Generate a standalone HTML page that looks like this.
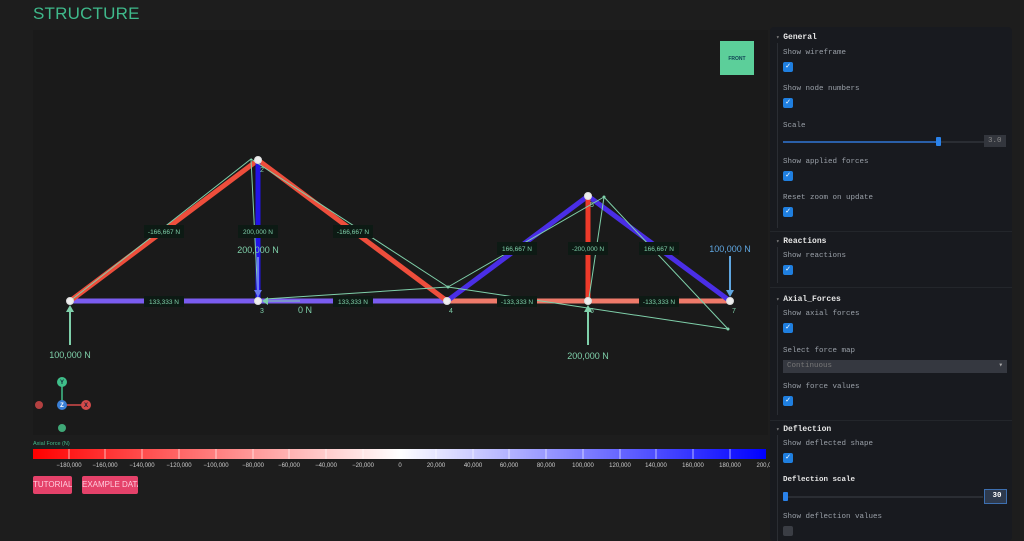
<!DOCTYPE html>
<html><head><meta charset="utf-8"><style>
html,body{margin:0;width:1024px;height:541px;overflow:hidden}
body{background:#1d1d1d;font-family:"Liberation Sans",sans-serif;position:relative}
.title{position:absolute;left:33px;top:4px;color:#3fb98b;font-size:17px;letter-spacing:.2px}
.canvas{position:absolute;left:33px;top:30px;width:735px;height:405px;background:#1a1a1a}
.side{position:absolute;left:770px;top:27px;width:242px;height:514px;background:#181a1f;border-radius:4px;font-family:"Liberation Mono",monospace;font-size:7.5px;color:#9aa0a8}
.sec{position:absolute;left:6px;color:#e6e6e6;font-weight:bold;font-size:8px}
.sec:before{content:"▾ ";color:#888;font-size:6px}
.lbl{position:absolute;left:13px;white-space:nowrap}
.cb{position:absolute;left:13px;width:10px;height:10px;background:#1f7fe0;border-radius:2px;color:#fff;font-size:8px;line-height:10px;text-align:center}
.vline{position:absolute;left:7px;width:1px;background:#2a2d33}
.hline{position:absolute;left:0;width:242px;height:1px;background:#23262b}
.btn{position:absolute;top:476px;height:18px;background:#e5426a;color:#fcd;font-size:8px;line-height:18px;text-align:center;border-radius:2px;white-space:nowrap;overflow:hidden}
.tk{position:absolute;top:463px;font-size:6px;color:#ccc;transform:translateX(-50%);white-space:nowrap}
</style></head><body>
<div class="title">STRUCTURE</div>
<div class="canvas"></div>
<svg style="position:absolute;left:0;top:0" width="1024" height="541">
<g stroke-linecap="round">
<line x1="70" y1="301" x2="258" y2="301" stroke="#7a5cf0" stroke-width="5"/>
<line x1="258" y1="301" x2="447" y2="301" stroke="#7a5cf0" stroke-width="5"/>
<line x1="447" y1="301" x2="730" y2="301" stroke="#ef7a6a" stroke-width="5"/>
<line x1="70" y1="301" x2="258" y2="160" stroke="#ee4e3c" stroke-width="5"/>
<line x1="258" y1="160" x2="447" y2="301" stroke="#ee4e3c" stroke-width="5"/>
<line x1="258" y1="160" x2="258" y2="301" stroke="#2214e8" stroke-width="5"/>
<line x1="447" y1="301" x2="588" y2="196" stroke="#4a2ee6" stroke-width="5"/>
<line x1="588" y1="196" x2="730" y2="301" stroke="#4a2ee6" stroke-width="5"/>
<line x1="588" y1="196" x2="588" y2="301" stroke="#ee3a2a" stroke-width="5"/>
</g>
<g stroke="#7fd0aa" stroke-width="1" fill="none">
<polyline points="70,301 251,159 258,300"/>
<line x1="251" y1="159" x2="448" y2="287"/>
<line x1="265" y1="299" x2="448" y2="287"/>
<line x1="448" y1="287" x2="604" y2="197"/>
<line x1="604" y1="197" x2="589" y2="298"/>
<line x1="604" y1="197" x2="728" y2="329"/>
<line x1="448" y1="287" x2="728" y2="329"/>
</g>
<g fill="#7fd0aa"><circle cx="448" cy="287" r="1.5"/><circle cx="604" cy="197" r="1.5"/><circle cx="728" cy="329" r="1.5"/></g>
<g fill="#eee" stroke="#ddd"><circle cx="70" cy="301" r="3.5"/><circle cx="258" cy="160" r="3.5"/><circle cx="258" cy="301" r="3.5"/><circle cx="447" cy="301" r="3.5"/><circle cx="588" cy="196" r="3.5"/><circle cx="588" cy="301" r="3.5"/><circle cx="730" cy="301" r="3.5"/></g>
<g font-size="7" fill="#7fd0aa" text-anchor="middle">
<text x="262" y="172">2</text><text x="262" y="313">3</text><text x="451" y="313">4</text><text x="592" y="207">5</text><text x="592" y="313">6</text><text x="734" y="313">7</text>
</g>
<g stroke="#7fd0aa" stroke-width="2" fill="#7fd0aa">
<line x1="70" y1="345" x2="70" y2="310"/><polygon points="66,312 74,312 70,305" stroke="none"/>
<line x1="588" y1="345" x2="588" y2="310"/><polygon points="584,312 592,312 588,305" stroke="none"/>
<line x1="300" y1="301" x2="268" y2="301" stroke-width="1"/><polygon points="268,297 268,305 262,301" stroke="none"/>
</g>
<g stroke="#6a7af0" stroke-width="2" fill="#6a7af0"><line x1="258" y1="257" x2="258" y2="290"/><polygon points="254,290 262,290 258,297" stroke="none"/></g>
<g stroke="#5fa6e0" stroke-width="2" fill="#5fa6e0"><line x1="730" y1="256" x2="730" y2="290"/><polygon points="726,290 734,290 730,297" stroke="none"/></g>
<g font-size="9" fill="#7fd0aa" text-anchor="middle">
<text x="70" y="358">100,000 N</text><text x="258" y="253">200,000 N</text><text x="305" y="313">0 N</text><text x="588" y="359">200,000 N</text>
<text x="730" y="252" fill="#5fa6e0">100,000 N</text>
</g>
<g font-size="6.5" text-anchor="middle">
<g fill="#0d1a14"><rect x="144" y="225" width="40" height="13"/><rect x="238" y="225" width="40" height="13"/><rect x="333" y="225" width="40" height="13"/><rect x="144" y="296" width="40" height="11"/><rect x="333" y="296" width="40" height="11"/><rect x="497" y="242" width="40" height="13"/><rect x="568" y="242" width="40" height="13"/><rect x="639" y="242" width="40" height="13"/><rect x="497" y="296" width="40" height="11"/><rect x="639" y="296" width="40" height="11"/></g>
<g fill="#7fd0aa"><text x="164" y="234">-166,667 N</text><text x="258" y="234">200,000 N</text><text x="353" y="234">-166,667 N</text><text x="164" y="304">133,333 N</text><text x="353" y="304">133,333 N</text><text x="517" y="251">166,667 N</text><text x="588" y="251">-200,000 N</text><text x="659" y="251">166,667 N</text><text x="517" y="304">-133,333 N</text><text x="659" y="304">-133,333 N</text></g>
</g>
<line x1="62" y1="382" x2="62" y2="405" stroke="#3fbf8a" stroke-width="1.5"/>
<line x1="62" y1="405" x2="86" y2="405" stroke="#d34a4a" stroke-width="1.5"/>
<circle cx="62" cy="382" r="5" fill="#3fbf8a"/><circle cx="62" cy="405" r="5" fill="#3a7fd6"/><circle cx="86" cy="405" r="5" fill="#d34a4a"/>
<circle cx="39" cy="405" r="4" fill="#b34040"/><circle cx="62" cy="428" r="4" fill="#3fa877"/>
<g font-size="6" fill="#123" text-anchor="middle" font-weight="bold"><text x="62" y="384">Y</text><text x="62" y="407" fill="#fff">Z</text><text x="86" y="407">X</text></g>
<rect x="720" y="41" width="34" height="34" fill="#5ccf9a"/>
<text x="737" y="60" font-size="5" fill="#145" text-anchor="middle" font-weight="bold">FRONT</text>
<text x="33" y="445" font-size="5.5" fill="#3fb98b">Axial Force (N)</text>
<defs><linearGradient id="g" x1="0" x2="1"><stop offset="0" stop-color="#f00"/><stop offset=".5" stop-color="#fff"/><stop offset="1" stop-color="#0000ff"/></linearGradient></defs>
<rect x="33" y="449" width="733" height="10" fill="url(#g)"/>
<g stroke="#fff" stroke-width=".8" opacity=".8">
<line x1="69" y1="449" x2="69" y2="459"/><line x1="105" y1="449" x2="105" y2="459"/><line x1="142" y1="449" x2="142" y2="459"/><line x1="179" y1="449" x2="179" y2="459"/><line x1="216" y1="449" x2="216" y2="459"/><line x1="253" y1="449" x2="253" y2="459"/><line x1="289" y1="449" x2="289" y2="459"/><line x1="326" y1="449" x2="326" y2="459"/><line x1="363" y1="449" x2="363" y2="459"/><line x1="436" y1="449" x2="436" y2="459"/><line x1="473" y1="449" x2="473" y2="459"/><line x1="509" y1="449" x2="509" y2="459"/><line x1="546" y1="449" x2="546" y2="459"/><line x1="583" y1="449" x2="583" y2="459"/><line x1="620" y1="449" x2="620" y2="459"/><line x1="656" y1="449" x2="656" y2="459"/><line x1="693" y1="449" x2="693" y2="459"/><line x1="730" y1="449" x2="730" y2="459"/>
</g>
</svg>
<div class="tk" style="left:69px">−180,000</div><div class="tk" style="left:105px">−160,000</div><div class="tk" style="left:142px">−140,000</div><div class="tk" style="left:179px">−120,000</div><div class="tk" style="left:216px">−100,000</div><div class="tk" style="left:253px">−80,000</div><div class="tk" style="left:289px">−60,000</div><div class="tk" style="left:326px">−40,000</div><div class="tk" style="left:363px">−20,000</div><div class="tk" style="left:400px">0</div><div class="tk" style="left:436px">20,000</div><div class="tk" style="left:473px">40,000</div><div class="tk" style="left:509px">60,000</div><div class="tk" style="left:546px">80,000</div><div class="tk" style="left:583px">100,000</div><div class="tk" style="left:620px">120,000</div><div class="tk" style="left:656px">140,000</div><div class="tk" style="left:693px">160,000</div><div class="tk" style="left:730px">180,000</div><div class="tk" style="left:764px">200,0</div>
<div class="btn" style="left:33px;width:39px">TUTORIAL</div>
<div class="btn" style="left:82px;width:56px">EXAMPLE DATA</div>
<div class="side">
<div class="vline" style="top:16px;height:185px"></div>
<div class="sec" style="top:6px">General</div>
<div class="lbl" style="top:22px">Show wireframe</div><div class="cb" style="top:35px">✓</div>
<div class="lbl" style="top:58px">Show node numbers</div><div class="cb" style="top:71px">✓</div>
<div class="lbl" style="top:95px">Scale</div>
<div style="position:absolute;left:13px;top:114px;width:156px;height:2px;background:#2a5fa8"></div>
<div style="position:absolute;left:169px;top:114px;width:50px;height:2px;background:#2a2d33"></div>
<div style="position:absolute;left:166px;top:110px;width:5px;height:9px;background:#2a82ea;border-radius:1px"></div>
<div style="position:absolute;left:214px;top:108px;width:22px;height:12px;background:#33363d;color:#888;text-align:right;line-height:12px">3.0&nbsp;</div>
<div class="lbl" style="top:131px">Show applied forces</div><div class="cb" style="top:144px">✓</div>
<div class="lbl" style="top:167px">Reset zoom on update</div><div class="cb" style="top:180px">✓</div>
<div class="hline" style="top:204px"></div>
<div class="vline" style="top:220px;height:36px"></div>
<div class="sec" style="top:210px">Reactions</div>
<div class="lbl" style="top:225px">Show reactions</div><div class="cb" style="top:238px">✓</div>
<div class="hline" style="top:260px"></div>
<div class="vline" style="top:278px;height:110px"></div>
<div class="sec" style="top:268px">Axial_Forces</div>
<div class="lbl" style="top:283px">Show axial forces</div><div class="cb" style="top:296px">✓</div>
<div class="lbl" style="top:320px">Select force map</div>
<div style="position:absolute;left:13px;top:333px;width:224px;height:13px;background:#353840;color:#777;line-height:13px;text-indent:4px">Continuous<span style="position:absolute;right:4px;color:#aaa">▾</span></div>
<div class="lbl" style="top:356px">Show force values</div><div class="cb" style="top:369px">✓</div>
<div class="hline" style="top:393px"></div>
<div class="vline" style="top:408px;height:106px"></div>
<div class="sec" style="top:398px">Deflection</div>
<div class="lbl" style="top:413px">Show deflected shape</div><div class="cb" style="top:426px">✓</div>
<div class="lbl" style="top:449px;color:#e6e6e6;font-weight:bold">Deflection scale</div>
<div style="position:absolute;left:13px;top:469px;width:200px;height:2px;background:#2a2d33"></div>
<div style="position:absolute;left:13px;top:465px;width:5px;height:9px;background:#2a82ea;border-radius:1px"></div>
<div style="position:absolute;left:214px;top:462px;width:21px;height:13px;background:#2e3a4d;border:1px solid #3d6fb0;color:#fff;text-align:right;line-height:13px;font-weight:bold">30&nbsp;</div>
<div class="lbl" style="top:486px">Show deflection values</div><div class="cb" style="top:499px;background:#3a3d44"></div>
</div>
</body></html>
